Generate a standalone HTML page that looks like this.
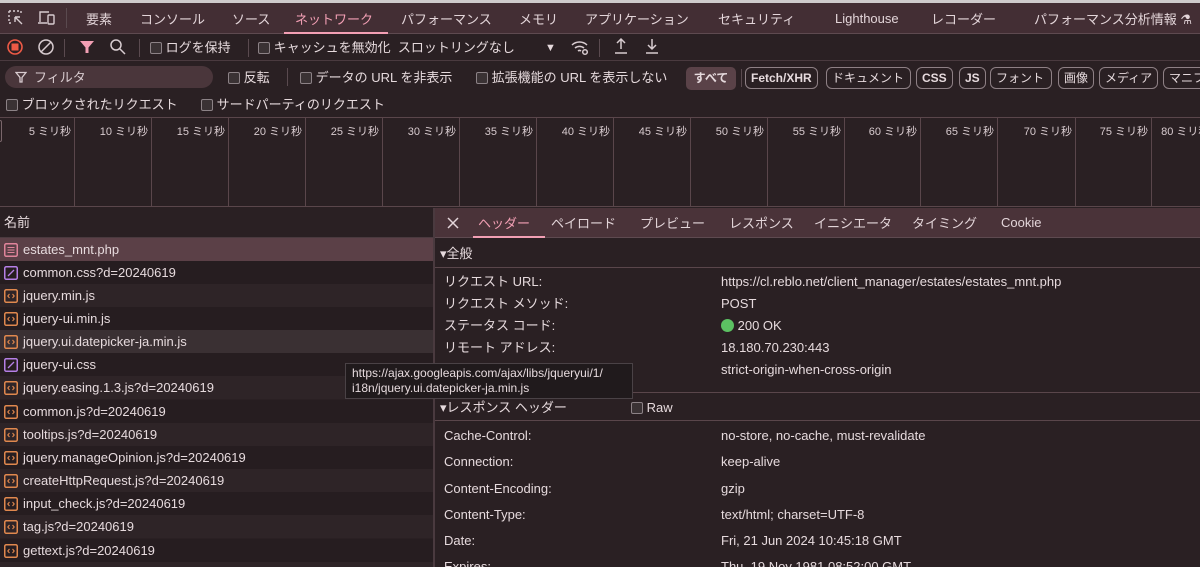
<!DOCTYPE html>
<html><head><meta charset="utf-8">
<style>
*{box-sizing:border-box;margin:0;padding:0}
html,body{width:1200px;height:567px;overflow:hidden}
body{background:#2a2023;font-family:"Liberation Sans","Noto Sans CJK JP",sans-serif;color:#e6dadd;font-size:13px;line-height:16px;position:relative}
.abs{position:absolute;white-space:nowrap}
#strip{left:0;top:0;width:1200px;height:3px;background:#cfcbcc}
#tabs{left:0;top:3px;width:1200px;height:31px;background:#432e34;border-bottom:1px solid #5e4a50}
.tab{position:absolute;top:9px;font-size:13px;line-height:16px;color:#e3d5d9;white-space:nowrap}
#tb{left:0;top:34px;width:1200px;height:27px;background:#2a2023;border-bottom:1px solid #4a3a3f}
.cb{display:inline-block;width:12px;height:12px;border:1px solid #8c8286;border-radius:2px;background:#3a3234;vertical-align:-2px}
.sep{position:absolute;width:1px;background:#5a4a4f}
#filter{left:5px;top:66px;width:208px;height:22px;border-radius:11px;background:#4a363b}
.pill{position:absolute;top:67px;height:22px;border:1px solid #8e8085;border-radius:6px;padding:0 5px;font-size:12px;line-height:20px;color:#e6dadd;font-weight:bold;white-space:nowrap}
#tl{left:0;top:117px;width:1200px;height:90px;border-top:1px solid #5a464b;border-bottom:1px solid #5a464b}
.vl{position:absolute;top:0;width:1px;height:89px;background:#5a464b}
.ms{position:absolute;top:7px;font-size:11px;line-height:14px;color:#d8cbcf;text-align:right;width:70px;white-space:nowrap}
#lh{left:0;top:208px;width:433px;height:30px;background:#2a2023;border-bottom:1px solid #4a3a3f}
.row{position:absolute;left:0;width:433px;height:23px;font-size:13px;line-height:24px;padding-left:23px;color:#e6dadd;white-space:nowrap}
.row svg{position:absolute;left:4px;top:5px}
#div{left:433px;top:208px;width:2px;height:359px;background:#4a3a3f}
#rt{left:435px;top:208px;width:765px;height:30px;background:#4a3339;border-bottom:1px solid #5e4a50}
.rtab{position:absolute;top:8px;font-size:13px;line-height:16px;color:#e3d5d9;white-space:nowrap}
.kv{position:absolute;font-size:13px;line-height:16px;color:#e6dadd;white-space:nowrap}
</style></head><body>
<svg width="0" height="0" style="position:absolute">
<defs>
<g id="js"><rect x="0.75" y="0.75" width="12.5" height="12.5" rx="1.5" fill="none" stroke="#e0884e" stroke-width="1.5"/><path d="M5.5 5L3.8 7l1.7 2M8.5 5l1.7 2-1.7 2" fill="none" stroke="#e0884e" stroke-width="1.1"/></g>
<g id="css"><rect x="0.75" y="0.75" width="12.5" height="12.5" rx="1.5" fill="none" stroke="#b57fe6" stroke-width="1.5"/><path d="M4 10L10 4" stroke="#b57fe6" stroke-width="1.3"/></g>
<g id="doc"><rect x="0.75" y="0.75" width="12.5" height="12.5" rx="1.5" fill="none" stroke="#e0849b" stroke-width="1.5"/><path d="M3.5 4.5h7M3.5 7h7M3.5 9.5h7" stroke="#e0849b" stroke-width="1.1"/></g>
</defs></svg>
<div class="abs" id="strip"></div>
<div class="abs" id="tabs">
<svg style="position:absolute;left:7px;top:6px" width="18" height="18" viewBox="0 0 18 18" fill="none" stroke="#d8ccd0" stroke-width="1.4"><path d="M2 2h2M6 2h2M10 2h2M2 2v2M2 6v2M2 10v2M2 14h2M14 2v2"/><path d="M8 8l7 7M8 8v5M8 8h5"/></svg>
<svg style="position:absolute;left:36px;top:6px" width="20" height="18" viewBox="0 0 20 18" fill="none" stroke="#d8ccd0" stroke-width="1.4"><path d="M4 13V3h9M2 14h9"/><rect x="12" y="6" width="6" height="9" rx="1"/></svg>
<div class="sep" style="left:66px;top:5px;height:20px"></div>
<span class="tab" style="left:86px">要素</span>
<span class="tab" style="left:140px">コンソール</span>
<span class="tab" style="left:232px">ソース</span>
<span class="tab" style="left:295px;color:#f29fb4">ネットワーク</span>
<div style="position:absolute;left:284px;top:29px;width:104px;height:2px;background:#f29fb4"></div>
<span class="tab" style="left:401px">パフォーマンス</span>
<span class="tab" style="left:519px">メモリ</span>
<span class="tab" style="left:585px">アプリケーション</span>
<span class="tab" style="left:718px">セキュリティ</span>
<span class="tab" style="left:835px;top:8px">Lighthouse</span>
<span class="tab" style="left:931px">レコーダー</span>
<span class="tab" style="left:1034px">パフォーマンス分析情報 ⚗</span>
</div>
<div class="abs" id="tb">
<svg style="position:absolute;left:6px;top:4px" width="18" height="18"><circle cx="9" cy="9" r="7" fill="none" stroke="#ee5a46" stroke-width="1.6"/><rect x="5.5" y="5.5" width="7" height="7" fill="#ee5a46"/></svg>
<svg style="position:absolute;left:37px;top:4px" width="18" height="18" fill="none" stroke="#d8ccd0" stroke-width="1.5"><circle cx="9" cy="9" r="7"/><path d="M4 14L14 4"/></svg>
<div class="sep" style="left:64px;top:5px;height:18px"></div>
<svg style="position:absolute;left:79px;top:5px" width="16" height="16"><path d="M1 2h14L9.5 8.5V14h-3V8.5z" fill="#f29fb4"/></svg>
<svg style="position:absolute;left:109px;top:4px" width="18" height="18" fill="none" stroke="#d8ccd0" stroke-width="1.5"><circle cx="7" cy="7" r="5"/><path d="M11 11l5 5"/></svg>
<div class="sep" style="left:139px;top:5px;height:18px"></div>
<span class="abs" style="left:150px;top:6px"><span class="cb"></span> ログを保持</span>
<div class="sep" style="left:248px;top:5px;height:18px"></div>
<span class="abs" style="left:258px;top:6px"><span class="cb"></span> キャッシュを無効化&nbsp; スロットリングなし</span>
<span class="abs" style="left:545px;top:6px;font-size:11px">▼</span>
<svg style="position:absolute;left:570px;top:4px" width="20" height="18" fill="none" stroke="#d8ccd0" stroke-width="1.5"><path d="M2 7a11 11 0 0 1 15 0M5 10a7 7 0 0 1 9 0M8 13a2.5 2.5 0 0 1 3 0"/><circle cx="15" cy="14" r="2.3"/></svg>
<div class="sep" style="left:599px;top:5px;height:18px"></div>
<svg style="position:absolute;left:613px;top:3px" width="16" height="18" fill="none" stroke="#d8ccd0" stroke-width="1.5"><path d="M8 12V2M4 6l4-4 4 4M2 16h12"/></svg>
<svg style="position:absolute;left:644px;top:3px" width="16" height="18" fill="none" stroke="#d8ccd0" stroke-width="1.5"><path d="M8 2v10M4 8l4 4 4-4M2 16h12"/></svg>
</div>
<div class="abs" id="filter"></div>
<svg style="position:absolute;left:15px;top:71px" width="12" height="12" fill="none" stroke="#d8cbcf" stroke-width="1.3"><path d="M1 1.5h10L7 6.5V11H5V6.5z"/></svg>
<span class="abs" style="left:34px;top:70px;color:#d8cbcf">フィルタ</span>
<span class="abs" style="left:228px;top:70px"><span class="cb"></span> 反転</span>
<div class="sep" style="left:287px;top:68px;height:18px"></div>
<span class="abs" style="left:300px;top:70px"><span class="cb"></span> データの URL を非表示</span>
<span class="abs" style="left:476px;top:70px"><span class="cb"></span> 拡張機能の URL を表示しない</span>
<div class="abs" style="left:686px;top:67px;width:50px;height:23px;border-radius:5px;background:#5a4248;font-size:12px;font-weight:bold;line-height:23px;text-align:center">すべて</div>
<div class="sep" style="left:741px;top:69px;height:18px"></div>
<div class="pill" style="left:745px">Fetch/XHR</div>
<div class="pill" style="left:826px;font-weight:normal;width:85px">ドキュメント</div>
<div class="pill" style="left:916px">CSS</div>
<div class="pill" style="left:959px">JS</div>
<div class="pill" style="left:990px;font-weight:normal;width:62px">フォント</div>
<div class="pill" style="left:1058px;font-weight:normal">画像</div>
<div class="pill" style="left:1099px;font-weight:normal;width:59px">メディア</div>
<div class="pill" style="left:1163px;font-weight:normal;width:60px">マニフ</div>
<span class="abs" style="left:6px;top:97px"><span class="cb"></span> ブロックされたリクエスト</span>
<span class="abs" style="left:201px;top:97px"><span class="cb"></span> サードパーティのリクエスト</span>
<div class="abs" id="tl">
<div style="position:absolute;left:-3px;top:2px;width:5px;height:22px;border:1px solid #7a666b;border-radius:2px"></div>
<div class="vl" style="left:74px"></div><div class="ms" style="left:1px">5 ミリ秒</div>
<div class="vl" style="left:151px"></div><div class="ms" style="left:78px">10 ミリ秒</div>
<div class="vl" style="left:228px"></div><div class="ms" style="left:155px">15 ミリ秒</div>
<div class="vl" style="left:305px"></div><div class="ms" style="left:232px">20 ミリ秒</div>
<div class="vl" style="left:382px"></div><div class="ms" style="left:309px">25 ミリ秒</div>
<div class="vl" style="left:459px"></div><div class="ms" style="left:386px">30 ミリ秒</div>
<div class="vl" style="left:536px"></div><div class="ms" style="left:463px">35 ミリ秒</div>
<div class="vl" style="left:613px"></div><div class="ms" style="left:540px">40 ミリ秒</div>
<div class="vl" style="left:690px"></div><div class="ms" style="left:617px">45 ミリ秒</div>
<div class="vl" style="left:767px"></div><div class="ms" style="left:694px">50 ミリ秒</div>
<div class="vl" style="left:844px"></div><div class="ms" style="left:771px">55 ミリ秒</div>
<div class="vl" style="left:920px"></div><div class="ms" style="left:847px">60 ミリ秒</div>
<div class="vl" style="left:997px"></div><div class="ms" style="left:924px">65 ミリ秒</div>
<div class="vl" style="left:1075px"></div><div class="ms" style="left:1002px">70 ミリ秒</div>
<div class="vl" style="left:1151px"></div><div class="ms" style="left:1078px">75 ミリ秒</div>
<div class="ms" style="left:1155px;text-align:left">&nbsp;&nbsp;80 ミリ秒</div>
</div>
<div class="abs" id="lh"><span style="position:absolute;left:4px;top:7px">名前</span></div>
<div class="row" style="top:238px;background:#5b4047"><svg width="14" height="14"><use href="#doc"/></svg>estates_mnt.php</div>
<div class="row" style="top:261px;background:#261d20"><svg width="14" height="14"><use href="#css"/></svg>common.css?d=20240619</div>
<div class="row" style="top:284px;background:#2e2427"><svg width="14" height="14"><use href="#js"/></svg>jquery.min.js</div>
<div class="row" style="top:307px;background:#261d20"><svg width="14" height="14"><use href="#js"/></svg>jquery-ui.min.js</div>
<div class="row" style="top:330px;background:#3a3033"><svg width="14" height="14"><use href="#js"/></svg>jquery.ui.datepicker-ja.min.js</div>
<div class="row" style="top:353px;background:#261d20"><svg width="14" height="14"><use href="#css"/></svg>jquery-ui.css</div>
<div class="row" style="top:376px;background:#2e2427"><svg width="14" height="14"><use href="#js"/></svg>jquery.easing.1.3.js?d=20240619</div>
<div class="row" style="top:400px;background:#261d20"><svg width="14" height="14"><use href="#js"/></svg>common.js?d=20240619</div>
<div class="row" style="top:423px;background:#2e2427"><svg width="14" height="14"><use href="#js"/></svg>tooltips.js?d=20240619</div>
<div class="row" style="top:446px;background:#261d20"><svg width="14" height="14"><use href="#js"/></svg>jquery.manageOpinion.js?d=20240619</div>
<div class="row" style="top:469px;background:#2e2427"><svg width="14" height="14"><use href="#js"/></svg>createHttpRequest.js?d=20240619</div>
<div class="row" style="top:492px;background:#261d20"><svg width="14" height="14"><use href="#js"/></svg>input_check.js?d=20240619</div>
<div class="row" style="top:515px;background:#2e2427"><svg width="14" height="14"><use href="#js"/></svg>tag.js?d=20240619</div>
<div class="row" style="top:539px;background:#261d20"><svg width="14" height="14"><use href="#js"/></svg>gettext.js?d=20240619</div>
<div class="row" style="top:562px;background:#2e2427"></div>
<div class="abs" id="div"></div>
<div class="abs" id="rt">
<svg style="position:absolute;left:12px;top:9px" width="12" height="12" stroke="#e3d5d9" stroke-width="1.5"><path d="M1 1l10 10M11 1L1 11"/></svg>
<span class="rtab" style="left:43px;color:#f29fb4">ヘッダー</span>
<div style="position:absolute;left:38px;top:28px;width:72px;height:2px;background:#f29fb4"></div>
<span class="rtab" style="left:116px">ペイロード</span>
<span class="rtab" style="left:205px">プレビュー</span>
<span class="rtab" style="left:294px">レスポンス</span>
<span class="rtab" style="left:379px">イニシエータ</span>
<span class="rtab" style="left:477px">タイミング</span>
<span class="rtab" style="left:566px;top:7px">Cookie</span>
</div>
<div class="abs" style="left:435px;top:238px;width:765px;height:30px;background:#2a2023;border-bottom:1px solid #5a464b"></div>
<span class="abs" style="left:440px;top:246px">▾全般</span>
<span class="kv" style="left:444px;top:274px">リクエスト URL:</span><span class="kv" style="left:721px;top:274px">https://cl.reblo.net/client_manager/estates/estates_mnt.php</span>
<span class="kv" style="left:444px;top:296px">リクエスト メソッド:</span><span class="kv" style="left:721px;top:296px">POST</span>
<span class="kv" style="left:444px;top:318px">ステータス コード:</span><span class="kv" style="left:721px;top:318px"><span style="display:inline-block;width:13px;height:13px;border-radius:50%;background:#5cc162;vertical-align:-2px"></span> 200 OK</span>
<span class="kv" style="left:444px;top:340px">リモート アドレス:</span><span class="kv" style="left:721px;top:340px">18.180.70.230:443</span>
<span class="kv" style="left:721px;top:362px">strict-origin-when-cross-origin</span>
<div class="abs" style="left:435px;top:392px;width:765px;height:1px;background:#5a464b"></div>
<span class="abs" style="left:440px;top:400px">▾レスポンス ヘッダー</span>
<span class="abs" style="left:631px;top:400px"><span class="cb"></span> Raw</span>
<div class="abs" style="left:435px;top:420px;width:765px;height:1px;background:#5a464b"></div>
<span class="kv" style="left:444px;top:428px">Cache-Control:</span><span class="kv" style="left:721px;top:428px">no-store, no-cache, must-revalidate</span>
<span class="kv" style="left:444px;top:454px">Connection:</span><span class="kv" style="left:721px;top:454px">keep-alive</span>
<span class="kv" style="left:444px;top:481px">Content-Encoding:</span><span class="kv" style="left:721px;top:481px">gzip</span>
<span class="kv" style="left:444px;top:507px">Content-Type:</span><span class="kv" style="left:721px;top:507px">text/html; charset=UTF-8</span>
<span class="kv" style="left:444px;top:533px">Date:</span><span class="kv" style="left:721px;top:533px">Fri, 21 Jun 2024 10:45:18 GMT</span>
<span class="kv" style="left:444px;top:559px">Expires:</span><span class="kv" style="left:721px;top:559px">Thu, 19 Nov 1981 08:52:00 GMT</span>
<div class="abs" style="left:345px;top:363px;width:288px;height:36px;background:#201a1c;border:1px solid #4a4246;font-size:12px;line-height:15px;padding:2px 6px;color:#e6dadd;white-space:normal">https://ajax.googleapis.com/ajax/libs/jqueryui/1/<br>i18n/jquery.ui.datepicker-ja.min.js</div>
</body></html>
